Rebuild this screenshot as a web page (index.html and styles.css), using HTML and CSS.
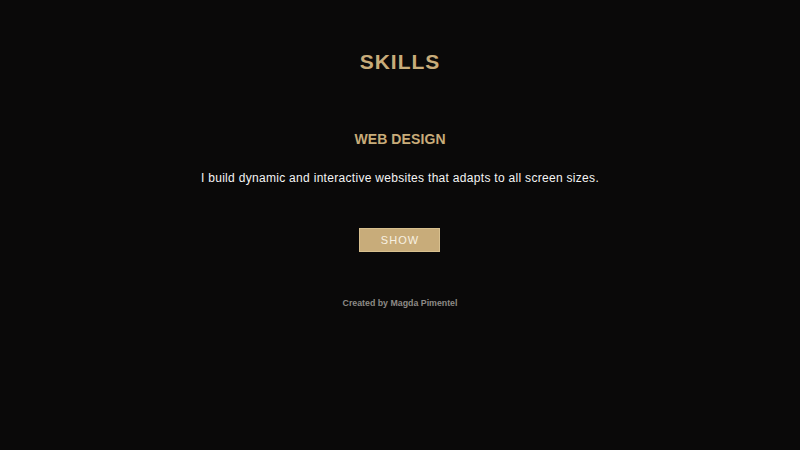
FILE: index.html
```html
<!DOCTYPE html>
<html>
<head>
<meta charset="utf-8">
<link rel="stylesheet" href="styles.css">
</head>
<body>
<main class="page">
  <h1 class="title">SKILLS</h1>
  <section class="skill">
    <h2 class="skill-name">WEB DESIGN</h2>
    <p class="skill-desc">I build dynamic and interactive websites that adapts to all screen sizes.</p>
    <button class="btn">SHOW</button>
  </section>
  <footer class="footer">Created by Magda Pimentel</footer>
</main>
</body>
</html>
```
FILE: styles.css
```css
html, body {
  margin: 0;
  padding: 0;
  background: #0a0909;
  height: 100%;
}
body {
  font-family: "Liberation Sans", Arial, sans-serif;
}
.page {
  display: flex;
  flex-direction: column;
  align-items: center;
  padding-top: 50px;
}
.title {
  margin: 0;
  color: #c8ac7a;
  font-size: 21px;
  font-weight: bold;
  letter-spacing: 1px;
  line-height: 24px;
}
.skill {
  display: flex;
  flex-direction: column;
  align-items: center;
  margin-top: 57px;
}
.skill-name {
  margin: 0;
  color: #c8ac7a;
  font-size: 14px;
  font-weight: bold;
  letter-spacing: 0.1px;
  line-height: 16px;
}
.skill-desc {
  margin: 23px 0 0;
  color: #f4f4f4;
  font-size: 12px;
  letter-spacing: 0.3px;
  line-height: 16px;
}
.btn {
  margin-top: 42px;
  width: 81px;
  height: 24px;
  background: #c8ac7a;
  border: 1px solid #d8c08f;
  color: #f8f1e2;
  font-family: "Liberation Sans", Arial, sans-serif;
  font-size: 11px;
  letter-spacing: 1px;
  padding: 0;
}
.footer {
  margin-top: 45px;
  color: #8d8a86;
  font-size: 8.8px;
  font-weight: bold;
  line-height: 12px;
}
```
